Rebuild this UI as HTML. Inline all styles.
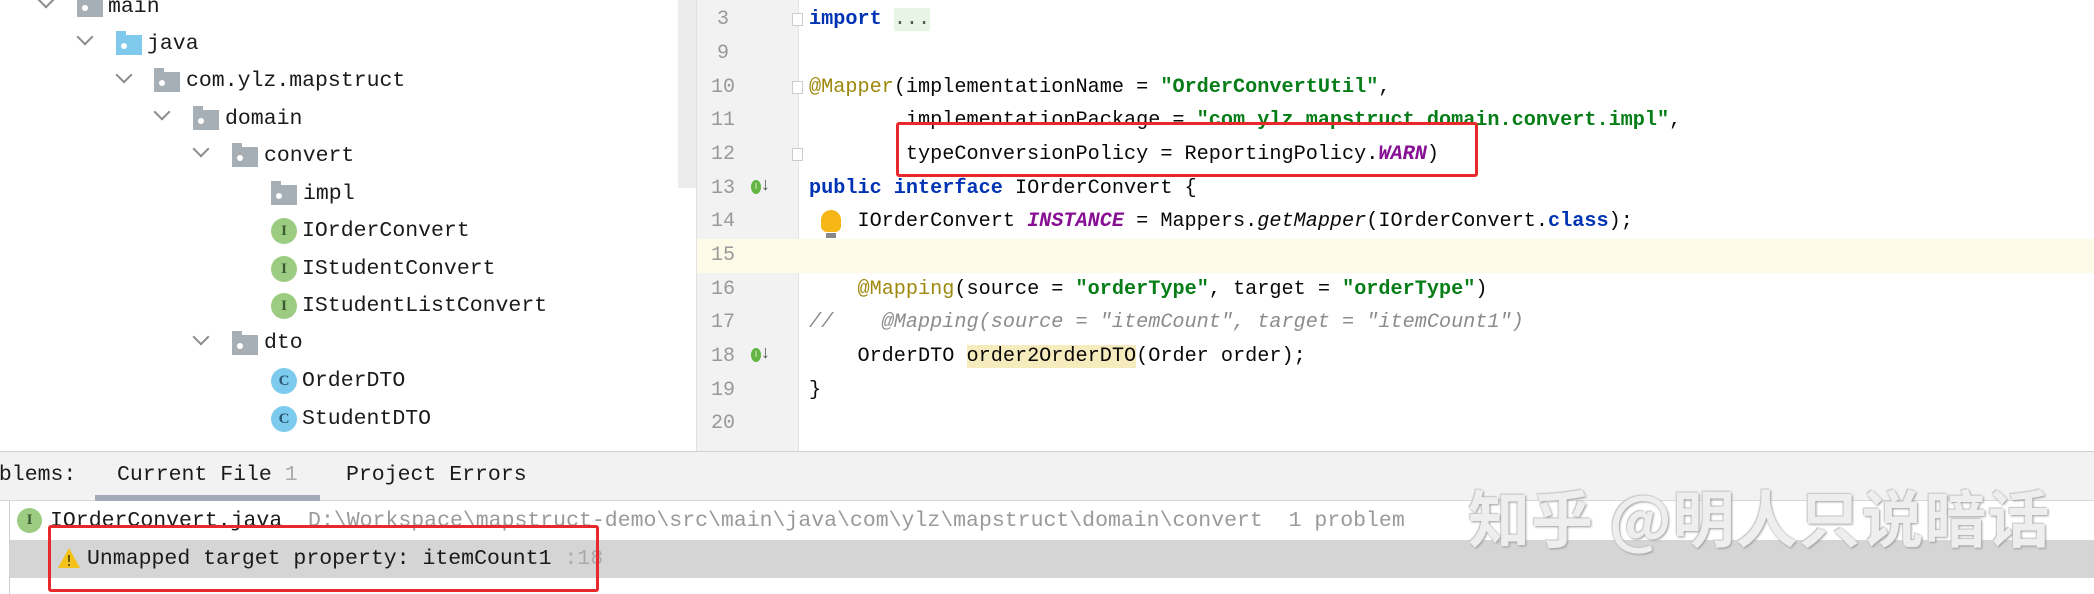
<!DOCTYPE html>
<html><head><meta charset="utf-8"><style>
*{margin:0;padding:0;box-sizing:border-box}
body{width:2094px;height:594px;overflow:hidden;background:#fff;position:relative;font-family:"Liberation Mono",monospace;}
.a{position:absolute;white-space:pre}
.t{font-size:21.5px;color:#1a1a1a;line-height:26px}
.c{font-size:20.2px;color:#080808;line-height:26px}
.ln{font-size:20px;color:#999;line-height:26px;width:40px;text-align:center}
.kw{color:#0033b3;font-weight:bold}
.str{color:#067d17;font-weight:bold}
.ann{color:#9e880d}
.it{color:#871094;font-style:italic;font-weight:bold}
.cm{color:#8c8c8c;font-style:italic}
.fold{position:absolute;width:11px;height:13px;border:1px solid #ccc;background:#fff}
.chev{position:absolute;width:12px;height:12px;border-right:2.5px solid #8c8c8c;border-bottom:2.5px solid #8c8c8c;transform:rotate(45deg)}
.fd{position:absolute;width:26px;height:20px;background:#a6aeb6}
.fd:before{content:"";position:absolute;left:0;top:-4px;width:10px;height:5px;background:#a6aeb6}
.fd:after{content:"";position:absolute;left:5px;top:8px;width:6px;height:6px;border-radius:50%;background:#fff}
.fd.j,.fd.j:before{background:#7ec9ec}
.ic{position:absolute;width:26px;height:26px;border-radius:50%;font:bold 15px "Liberation Serif",serif;color:#3b5a32;text-align:center;line-height:26px}
.gi{position:absolute;width:10px;height:14px;border-radius:50%;background:#62b543;font:8px sans-serif;color:#fff;text-align:center;line-height:14px}
</style></head><body>

<div class="a" style="left:678px;top:0;width:19px;height:188px;background:#ececec"></div>
<div class="a" style="left:696px;top:0;width:1px;height:451px;background:#e0e0e0"></div>

<div class="chev" style="left:40px;top:-6px"></div>
<div class="fd" style="left:77px;top:-3px"></div><div class="a t" style="left:108px;top:-6px">main</div>

<div class="chev" style="left:79px;top:31px"></div>
<div class="fd j" style="left:116px;top:35px"></div><div class="a t" style="left:147px;top:31px">java</div>

<div class="chev" style="left:118px;top:69px"></div>
<div class="fd" style="left:154px;top:72px"></div><div class="a t" style="left:186px;top:68px">com.ylz.mapstruct</div>

<div class="chev" style="left:156px;top:106px"></div>
<div class="fd" style="left:193px;top:110px"></div><div class="a t" style="left:225px;top:106px">domain</div>

<div class="chev" style="left:195px;top:143px"></div>
<div class="fd" style="left:232px;top:147px"></div><div class="a t" style="left:264px;top:143px">convert</div>

<div class="fd" style="left:271px;top:185px"></div><div class="a t" style="left:303px;top:181px">impl</div>

<div class="ic" style="left:271px;top:218px;background:#9ccc82">I</div><div class="a t" style="left:302px;top:218px">IOrderConvert</div>
<div class="ic" style="left:271px;top:256px;background:#9ccc82">I</div><div class="a t" style="left:302px;top:256px">IStudentConvert</div>
<div class="ic" style="left:271px;top:293px;background:#9ccc82">I</div><div class="a t" style="left:302px;top:293px">IStudentListConvert</div>

<div class="chev" style="left:195px;top:331px"></div>
<div class="fd" style="left:232px;top:335px"></div><div class="a t" style="left:264px;top:330px">dto</div>

<div class="ic" style="left:271px;top:368px;background:#7ccbee;color:#2c5670">C</div><div class="a t" style="left:302px;top:368px">OrderDTO</div>
<div class="ic" style="left:271px;top:406px;background:#7ccbee;color:#2c5670">C</div><div class="a t" style="left:302px;top:406px">StudentDTO</div>

<div class="a" style="left:697px;top:0;width:101px;height:451px;background:#f2f2f2"></div>
<div class="a" style="left:798px;top:0;width:1px;height:451px;background:#e4e4e4"></div>
<div class="a" style="left:697px;top:239px;width:1397px;height:34px;background:#fdfbe8"></div>

<div class="a ln" style="left:703px;top:7px">3</div>
<div class="a ln" style="left:703px;top:41px">9</div>
<div class="a ln" style="left:703px;top:75px">10</div>
<div class="a ln" style="left:703px;top:108px">11</div>
<div class="a ln" style="left:703px;top:142px">12</div>
<div class="a ln" style="left:703px;top:176px">13</div>
<div class="a ln" style="left:703px;top:209px">14</div>
<div class="a ln" style="left:703px;top:243px">15</div>
<div class="a ln" style="left:703px;top:277px">16</div>
<div class="a ln" style="left:703px;top:310px">17</div>
<div class="a ln" style="left:703px;top:344px">18</div>
<div class="a ln" style="left:703px;top:378px">19</div>
<div class="a ln" style="left:703px;top:411px">20</div>

<div class="gi" style="left:751px;top:180px">I</div><div class="a" style="left:760px;top:176px;font-size:18px;color:#555">↓</div>
<div class="gi" style="left:751px;top:348px">I</div><div class="a" style="left:760px;top:344px;font-size:18px;color:#555">↓</div>

<div class="fold" style="left:792px;top:13px"></div>
<div class="fold" style="left:792px;top:81px"></div>
<div class="fold" style="left:792px;top:148px"></div>

<div class="a c" style="left:809px;top:7px"><span class="kw">import</span> <span style="background:#e8f5e6;color:#555">...</span></div>
<div class="a c" style="left:809px;top:75px"><span class="ann">@Mapper</span>(implementationName = <span class="str">"OrderConvertUtil"</span>,</div>
<div class="a c" style="left:809px;top:108px">        implementationPackage = <span class="str">"com.ylz.mapstruct.domain.convert.impl"</span>,</div>
<div class="a c" style="left:809px;top:142px">        typeConversionPolicy = ReportingPolicy.<span class="it">WARN</span>)</div>
<div class="a c" style="left:809px;top:176px"><span class="kw">public interface</span> IOrderConvert {</div>
<div class="a c" style="left:809px;top:209px">    IOrderConvert <span class="it">INSTANCE</span> = Mappers.<i>getMapper</i>(IOrderConvert.<span class="kw">class</span>);</div>
<div class="a" style="left:821px;top:210px;width:20px;height:22px;border-radius:10px 10px 6px 6px;background:#f5b616"></div>
<div class="a" style="left:826px;top:233px;width:10px;height:5px;background:#888"></div>
<div class="a c" style="left:809px;top:277px">    <span class="ann">@Mapping</span>(source = <span class="str">"orderType"</span>, target = <span class="str">"orderType"</span>)</div>
<div class="a c cm" style="left:809px;top:310px">//    @Mapping(source = "itemCount", target = "itemCount1")</div>
<div class="a c" style="left:809px;top:344px">    OrderDTO <span style="background:#f6ebbc">order2OrderDTO</span>(Order order);</div>
<div class="a c" style="left:809px;top:378px">}</div>

<div class="a" style="left:896px;top:122px;width:582px;height:55px;border:3px solid #e8282b;border-radius:3px"></div>

<div class="a" style="left:0;top:451px;width:2094px;height:50px;background:#f2f2f2;border-top:1px solid #d0d0d0"></div>
<div class="a" style="left:0;top:500px;width:2094px;height:1px;background:#d8d8d8"></div>
<div class="a t" style="left:-14px;top:462px">oblems:</div>
<div class="a t" style="left:117px;top:462px">Current File <span style="color:#aaa">1</span></div>
<div class="a t" style="left:346px;top:462px">Project Errors</div>
<div class="a" style="left:95px;top:495px;width:225px;height:6px;background:#a3abb8"></div>
<div class="a" style="left:9px;top:501px;width:1px;height:93px;background:#d0d0d0"></div>
<div class="a" style="left:10px;top:540px;width:2084px;height:38px;background:#d5d5d5"></div>

<div class="ic" style="left:17px;top:508px;background:#9ccc82;width:25px;height:25px;line-height:25px">I</div>
<div class="a t" style="left:50px;top:508px">IOrderConvert.java  <span style="color:#9a9a9a">D:\Workspace\mapstruct-demo\src\main\java\com\ylz\mapstruct\domain\convert  1 problem</span></div>
<svg class="a" style="left:57px;top:547px" width="24" height="22" viewBox="0 0 24 22"><path d="M12 1 L23 21 L1 21 Z" fill="#f4c21a"/><rect x="11" y="8" width="2" height="7" fill="#6b5a00"/><rect x="11" y="17" width="2" height="2" fill="#6b5a00"/></svg>
<div class="a t" style="left:87px;top:546px">Unmapped target property: itemCount1 <span style="color:#aaa">:18</span></div>
<div class="a" style="left:48px;top:525px;width:551px;height:67px;border:3px solid #e8282b;border-radius:3px"></div>

<div class="a" style="left:1468px;top:470px;font:bold 62px 'Noto Sans CJK SC','WenQuanYi Zen Hei',sans-serif;color:#eeeeee;text-shadow:1px 1px 2px #9a9a9a,-1px -1px 1px #c8c8c8;letter-spacing:1px">知乎 @明人只说暗话</div>
</body></html>
